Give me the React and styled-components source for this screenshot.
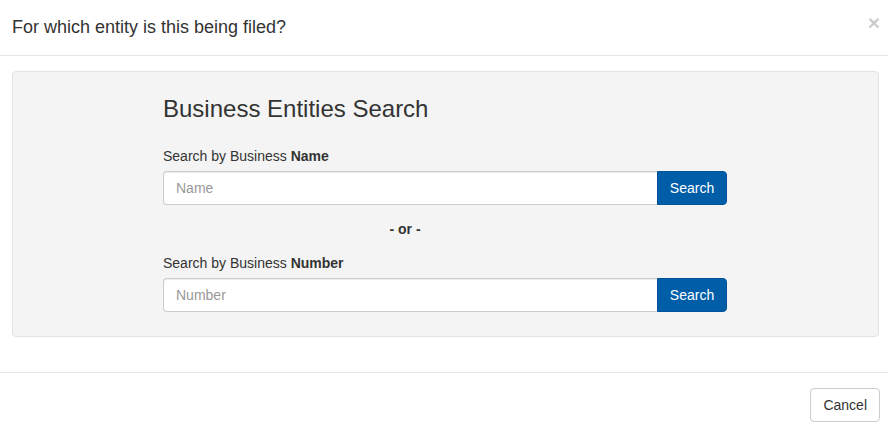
import React from "react";
import styled, { createGlobalStyle } from "styled-components";

const GlobalStyle = createGlobalStyle`
  body {
    margin: 0;
    background: #fff;
    font-family: "Liberation Sans", Arial, sans-serif;
    font-size: 14px;
    color: #333;
  }
  * {
    box-sizing: border-box;
  }
`;

const Modal = styled.div`
  width: 888px;
  height: 426px;
  background: #fff;
`;

const Header = styled.div`
  display: flex;
  align-items: center;
  justify-content: space-between;
  height: 56px;
  padding: 0 8px 0 12px;
  border-bottom: 1px solid #e5e5e5;
`;

const Title = styled.h4`
  margin: 0;
  font-size: 18px;
  font-weight: normal;
  line-height: 25px;
`;

const Close = styled.button`
  border: 0;
  background: none;
  padding: 0;
  margin-top: -11px;
  font-family: "Liberation Sans", Arial, sans-serif;
  font-size: 21px;
  font-weight: bold;
  line-height: 1;
  color: #000;
  opacity: 0.2;
  cursor: pointer;
`;

const Body = styled.div`
  padding: 15px 9px 35px 12px;
`;

const Well = styled.div`
  background: #f4f4f4;
  border: 1px solid #e3e3e3;
  border-radius: 4px;
  height: 266px;
  padding: 24px 0 0 150px;
`;

const Column = styled.div`
  width: 564px;
`;

const Heading = styled.h3`
  margin: 0 0 25px;
  font-size: 24px;
  font-weight: normal;
  line-height: 26px;
`;

const Label = styled.label`
  display: block;
  font-size: 14px;
  line-height: 18px;
  margin-bottom: 6px;

  b {
    font-weight: bold;
  }
`;

const InputGroup = styled.div`
  display: flex;
  height: 34px;
`;

const Input = styled.input`
  flex: 1;
  height: 34px;
  border: 1px solid #ccc;
  border-right: 0;
  border-radius: 4px 0 0 4px;
  padding: 6px 12px;
  font-family: "Liberation Sans", Arial, sans-serif;
  font-size: 14px;
  color: #555;
  background: #fff;
  box-shadow: inset 0 1px 1px rgba(0, 0, 0, 0.075);

  &::placeholder {
    color: #999;
  }
`;

const SearchButton = styled.button`
  width: 70px;
  height: 34px;
  border: 1px solid #00539a;
  border-radius: 0 4px 4px 0;
  background: #005ea8;
  color: #fff;
  font-family: "Liberation Sans", Arial, sans-serif;
  font-size: 14px;
  cursor: pointer;
`;

const Or = styled.div`
  width: 484px;
  text-align: center;
  font-size: 14px;
  font-weight: bold;
  line-height: 18px;
  margin: 15px 0 16px;
`;

const Footer = styled.div`
  display: flex;
  justify-content: flex-end;
  border-top: 1px solid #e5e5e5;
  padding: 15px 8px 0;
`;

const CancelButton = styled.button`
  height: 34px;
  padding: 0 12px;
  border: 1px solid #ccc;
  border-radius: 4px;
  background: #fff;
  color: #333;
  font-family: "Liberation Sans", Arial, sans-serif;
  font-size: 14px;
  cursor: pointer;
`;

const SearchField = ({ label, placeholder }) => (
  <>
    <Label>
      Search by Business <b>{label}</b>
    </Label>
    <InputGroup>
      <Input placeholder={placeholder} />
      <SearchButton>Search</SearchButton>
    </InputGroup>
  </>
);

export default function App() {
  return (
    <Modal>
      <GlobalStyle />
      <Header>
        <Title>For which entity is this being filed?</Title>
        <Close aria-label="Close">×</Close>
      </Header>
      <Body>
        <Well>
          <Column>
            <Heading>Business Entities Search</Heading>
            <SearchField label="Name" placeholder="Name" />
            <Or>- or -</Or>
            <SearchField label="Number" placeholder="Number" />
          </Column>
        </Well>
      </Body>
      <Footer>
        <CancelButton>Cancel</CancelButton>
      </Footer>
    </Modal>
  );
}
